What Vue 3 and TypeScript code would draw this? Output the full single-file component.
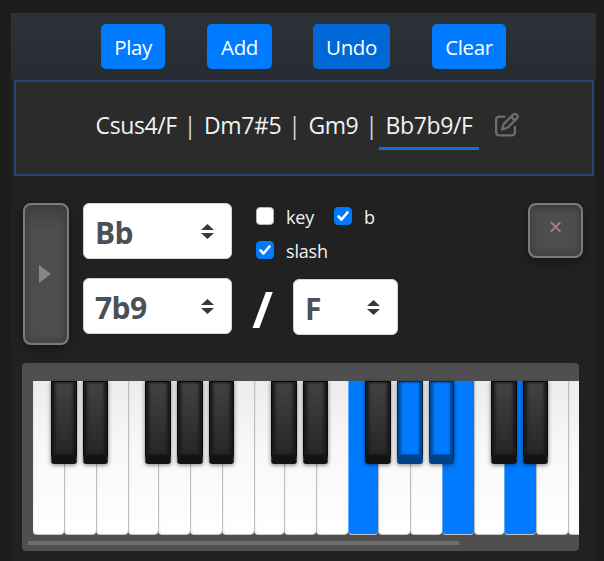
<script setup lang="ts">
interface WhiteKey {
  width: number
  active: boolean
  black: 'first' | 'mid' | 'last' | null
  blackActive: boolean
}

const widths = [31, 32, 32, 30, 32, 32, 32, 30, 32, 32, 30, 32, 32, 32, 30, 32, 32, 14]
const blackKind: Record<number, WhiteKey['black']> = {
  0: 'mid', 1: 'last', 3: 'first', 4: 'mid', 5: 'last', 7: 'first', 8: 'last',
  10: 'first', 11: 'mid', 12: 'last', 14: 'first', 15: 'last',
}
const activeWhite = new Set([10, 13, 15])
const activeBlack = new Set([11, 12])

const keys: WhiteKey[] = widths.map((width, i) => ({
  width,
  active: activeWhite.has(i),
  black: blackKind[i] ?? null,
  blackActive: activeBlack.has(i),
}))

const chords = ['Csus4/F', 'Dm7#5', 'Gm9', 'Bb7b9/F']
const actions = ['Play', 'Add', 'Undo', 'Clear']
</script>

<template>
  <div class="page">
    <div class="panel">
      <header class="toolbar">
        <button v-for="a in actions" :key="a" class="btn" :class="`btn-${a.toLowerCase()}`">{{ a }}</button>
      </header>

      <div class="chords">
        <template v-for="(c, i) in chords" :key="c">
          <span class="chord" :class="{ current: i === chords.length - 1 }">{{ c }}</span>
          <span v-if="i < chords.length - 1" class="sep">|</span>
        </template>
        <svg class="edit" viewBox="0 0 512 512" aria-hidden="true">
          <path fill="currentColor" d="M441 58.9L453.1 71c9.4 9.4 9.4 24.6 0 33.9L424 134.1 377.9 88 407 58.9c9.4-9.4 24.6-9.4 33.9 0zM209.8 256.2L344 121.9 390.1 168 255.8 302.2c-2.9 2.9-6.5 5-10.4 6.1l-58.5 16.7 16.7-58.5c1.1-3.9 3.2-7.5 6.1-10.4zM373.1 25L175.8 222.2c-8.7 8.7-15 19.4-18.3 31.1l-28.6 100c-2.4 8.4-.1 17.4 6.1 23.6s15.2 8.5 23.6 6.1l100-28.6c11.8-3.4 22.5-9.7 31.1-18.3L487 138.9c28.1-28.1 28.1-73.7 0-101.8L474.9 25C446.8-3.1 401.2-3.1 373.1 25zM88 64C39.4 64 0 103.4 0 152V424c0 48.6 39.4 88 88 88H360c48.6 0 88-39.4 88-88V312c0-13.3-10.7-24-24-24s-24 10.7-24 24V424c0 22.1-17.9 40-40 40H88c-22.1 0-40-17.9-40-40V152c0-22.1 17.9-40 40-40H200c13.3 0 24-10.7 24-24s-10.7-24-24-24H88z" />
        </svg>
      </div>

      <section class="editor">
        <button class="key-btn play-btn" aria-label="Play chord"><span class="tri"></span></button>

        <div class="form">
          <div class="form-top">
            <select class="sel sel-root"><option>Bb</option></select>
            <div class="checks">
              <div class="check-row">
                <label class="check check-key"><input type="checkbox" /><span>key</span></label>
                <label class="check"><input type="checkbox" checked /><span>b</span></label>
              </div>
              <div class="check-row">
                <label class="check"><input type="checkbox" checked /><span>slash</span></label>
              </div>
            </div>
          </div>
          <div class="form-bottom">
            <select class="sel sel-root"><option>7b9</option></select>
            <span class="slash">/</span>
            <select class="sel sel-bass"><option>F</option></select>
          </div>
        </div>

        <button class="key-btn close-btn" aria-label="Remove chord"><span class="x">×</span></button>
      </section>

      <section class="piano">
        <div class="keys">
          <div
            v-for="(k, i) in keys"
            :key="i"
            class="white"
            :class="{ on: k.active }"
            :style="{ width: k.width + 'px' }"
          >
            <div v-if="k.black" class="black" :class="[k.black, { on: k.blackActive }]"></div>
          </div>
        </div>
        <div class="scroll"><div class="thumb"></div></div>
      </section>
    </div>
  </div>
</template>

<style>
html, body { margin: 0; background: #1d1d1e; }
</style>

<style scoped>
.page {
  width: 604px;
  height: 561px;
  padding: 13px 8px 0 11px;
  box-sizing: border-box;
  overflow: hidden;
  font-family: "Open Sans", "Noto Sans", sans-serif;
}
.panel {
  height: 548px;
  background: #212121;
}
.toolbar {
  height: 67px;
  box-sizing: border-box;
  padding-top: 11px;
  display: flex;
  justify-content: center;
  align-items: flex-start;
  gap: 42px;
  background: linear-gradient(180deg, #2d3238, #272b32);
}
.btn {
  height: 45px;
  padding: 1px 0 0;
  border: 0;
  border-radius: 5px;
  background: #007bff;
  color: #fff;
  font: 400 20.5px/1 "Open Sans", sans-serif;
  letter-spacing: -0.4px;
}
.btn-play { width: 64px; }
.btn-add { width: 65px; }
.btn-undo { width: 77px; margin-left: -1px; background: #0067d6; }
.btn-clear { width: 74px; }

.chords {
  margin-left: 3px;
  width: 580px;
  height: 96px;
  box-sizing: border-box;
  border: 2px solid #28466f;
  background: #2b2b2b;
  display: flex;
  align-items: center;
  justify-content: center;
  color: #f2f2f2;
  font-size: 23px;
  letter-spacing: -0.4px;
}
.chord, .sep {
  height: 44px;
  line-height: 39px;
  box-sizing: border-box;
}
.chord {
  padding: 0 7px;
  border-bottom: 3px solid transparent;
}
.chord.current { border-bottom-color: #0f6fdc; }
.sep { color: #d4d4d4; margin: 0 1px 0 0; }
.edit {
  width: 24px;
  height: 25px;
  margin-left: 16px;
  margin-bottom: 7px;
  color: #6f6f6f;
}

.editor {
  display: flex;
  align-items: flex-start;
  padding: 27px 13px 0 12px;
  height: 187px;
  box-sizing: border-box;
}
.key-btn {
  padding: 0;
  border: 2px solid #7b7b7b;
  border-radius: 8px;
  background: linear-gradient(180deg, #404040 0%, #4d4d4d 18%, #4d4d4d 100%);
  box-shadow: inset 0 -10px 3px -5px #454545, inset 5px 0 5px -3px #3f3f3f, inset -5px 0 5px -3px #3f3f3f, 0 4px 8px rgba(0, 0, 0, .35);
  display: flex;
  align-items: center;
  justify-content: center;
  box-sizing: border-box;
}
.play-btn { width: 46px; height: 142px; flex: none; }
.tri {
  width: 0;
  height: 0;
  margin-right: 2px;
  border-left: 12px solid #868686;
  border-top: 9px solid transparent;
  border-bottom: 9px solid transparent;
}
.close-btn { width: 55px; height: 55px; flex: none; margin-left: auto; }
.x { color: #a77f88; font: 400 24px/1 "Liberation Sans", sans-serif; margin: 0 0 7px 0; }

.form {
  margin-left: 14px;
  display: flex;
  flex-direction: column;
  gap: 19px;
}
.form-top { display: flex; align-items: flex-start; height: 56px; }
.form-bottom { display: flex; align-items: flex-start; }
.sel {
  appearance: none;
  height: 56px;
  border: 1px solid #ced4da;
  border-radius: 6px;
  background: #fff url("data:image/svg+xml,%3Csvg xmlns='http://www.w3.org/2000/svg' width='13' height='15' viewBox='0 0 13 15'%3E%3Cpath fill='%23343a40' d='M6.5 0L13 6H0zM6.5 15L13 9H0z'/%3E%3C/svg%3E") no-repeat right 17px center;
  color: #495057;
  font: 700 30px/1 "Open Sans", sans-serif;
  letter-spacing: -0.6px;
  padding: 3px 0 0 11px;
  box-sizing: border-box;
}
.sel-root { width: 149px; }
.sel-bass { width: 105px; margin-top: 1px; }
.slash {
  width: 61px;
  text-align: center;
  color: #fff;
  font: 700 50px/62px "Open Sans", sans-serif;
}

.checks {
  margin-left: 24px;
  padding-top: 1px;
  display: flex;
  flex-direction: column;
  gap: 11px;
  color: #f2f2f2;
  font-size: 18px;
  letter-spacing: -0.2px;
}
.check-row { display: flex; gap: 20px; height: 23px; align-items: center; }
.check { display: flex; align-items: center; gap: 12px; }
.check span { margin-top: 2px; }
.check input {
  appearance: none;
  margin: 0;
  width: 18px;
  height: 18px;
  box-sizing: border-box;
  border: 1px solid #adb5bd;
  border-radius: 4px;
  background: #fff;
}
.check input:checked {
  border-color: #007bff;
  background: #007bff url("data:image/svg+xml,%3Csvg xmlns='http://www.w3.org/2000/svg' viewBox='0 0 16 16'%3E%3Cpath fill='none' stroke='%23fff' stroke-width='2.6' stroke-linecap='round' stroke-linejoin='round' d='M3.5 8.5l3 3 6-7'/%3E%3C/svg%3E") center/100% no-repeat;
}

.piano {
  margin-left: 11px;
  width: 557px;
  height: 188px;
  box-sizing: border-box;
  background: #4f4f4f;
  border-radius: 4px;
  padding: 18px 0 0 11px;
  overflow: hidden;
  position: relative;
}
.keys { display: flex; height: 154px; }
.white {
  flex: none;
  height: 154px;
  box-sizing: border-box;
  position: relative;
  background: linear-gradient(180deg, #ececec 0%, #f8f8f8 45%, #ffffff 100%);
  border-left: 1px solid #bdbdbd;
  border-bottom: 1px solid #c4c4c4;
  border-radius: 0 0 4px 4px;
  box-shadow: inset 1px 0 2px rgba(0, 0, 0, .05);
}
.white:first-child { border-left: 0; }
.white.on {
  background: #007bff;
  border-left-color: #5fa9f5;
  box-shadow: none;
}
.black {
  position: absolute;
  z-index: 2;
  top: 0;
  left: 18px;
  width: 26px;
  height: 83px;
  box-sizing: border-box;
  border: 1px solid #0a0a0a;
  border-bottom: 9px solid #131313;
  border-radius: 0 0 3px 3px;
  background: linear-gradient(180deg, #424242, #262626);
  box-shadow: inset 3px 0 3px #191919, inset -3px 0 3px #191919, 0 1px 4px rgba(0, 0, 0, .5);
}
.black.first { left: 16px; }
.black.last { width: 25px; }
.black.on {
  background: #007bff;
  border-color: #05294f;
  border-bottom-color: #00418a;
  box-shadow: inset 3px 0 3px #004a9c, inset -3px 0 2px #00458f, 0 1px 4px rgba(0, 0, 0, .5);
}
.scroll {
  position: absolute;
  left: 6px;
  right: 0;
  top: 178px;
  height: 4px;
}
.thumb { width: 431px; height: 4px; background: #6e6e6e; }
</style>
